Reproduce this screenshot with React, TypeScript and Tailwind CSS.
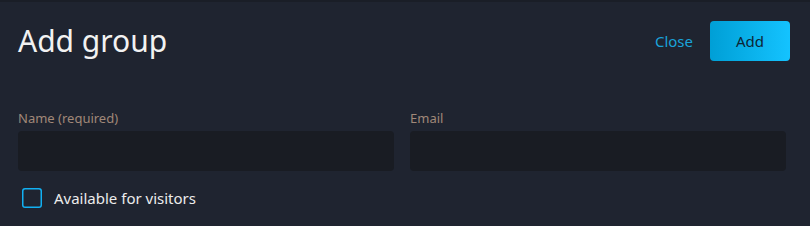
import React from "react";

export default function App() {
  return (
    <div
      className="w-[810px] h-[226px] bg-[#1f2430] border-t-2 border-[#1a1e27] overflow-hidden"
      style={{ fontFamily: '"Noto Sans", "Open Sans", sans-serif' }}
    >
      <div className="flex items-center justify-between pl-[18px] pr-[20px] pt-[19px]">
        <h1 className="text-[30px] leading-[40px] text-[#f2f2f2] font-normal">Add group</h1>
        <div className="flex items-center gap-[17px]">
          <button className="text-[15px] text-[#1aa3d9] leading-none ml-[1px]">Close</button>
          <button className="w-[80px] h-[40px] rounded-[4px] bg-gradient-to-r from-[#009fd6] to-[#14c3ff] text-[15px] text-[#0d2635]">
            Add
          </button>
        </div>
      </div>
      <div className="flex gap-[16px] pl-[18px] pr-[24px] mt-[48px]">
        <div className="flex-1 flex flex-col">
          <label className="text-[13px] leading-[18px] text-[#a08878]">Name (required)</label>
          <div className="mt-[4px] h-[40px] rounded-[4px] bg-[#191c23]" />
        </div>
        <div className="flex-1 flex flex-col">
          <label className="text-[13px] leading-[18px] text-[#a08878]">Email</label>
          <div className="mt-[4px] h-[40px] rounded-[4px] bg-[#191c23]" />
        </div>
      </div>
      <div className="flex items-center pl-[22px] mt-[16px]">
        <div className="w-[20px] h-[20px] rounded-[3px] ring-[1.5px] ring-inset ring-[#12b0f2]" />
        <span className="ml-[12px] text-[15px] text-[#ececec]">Available for visitors</span>
      </div>
    </div>
  );
}
